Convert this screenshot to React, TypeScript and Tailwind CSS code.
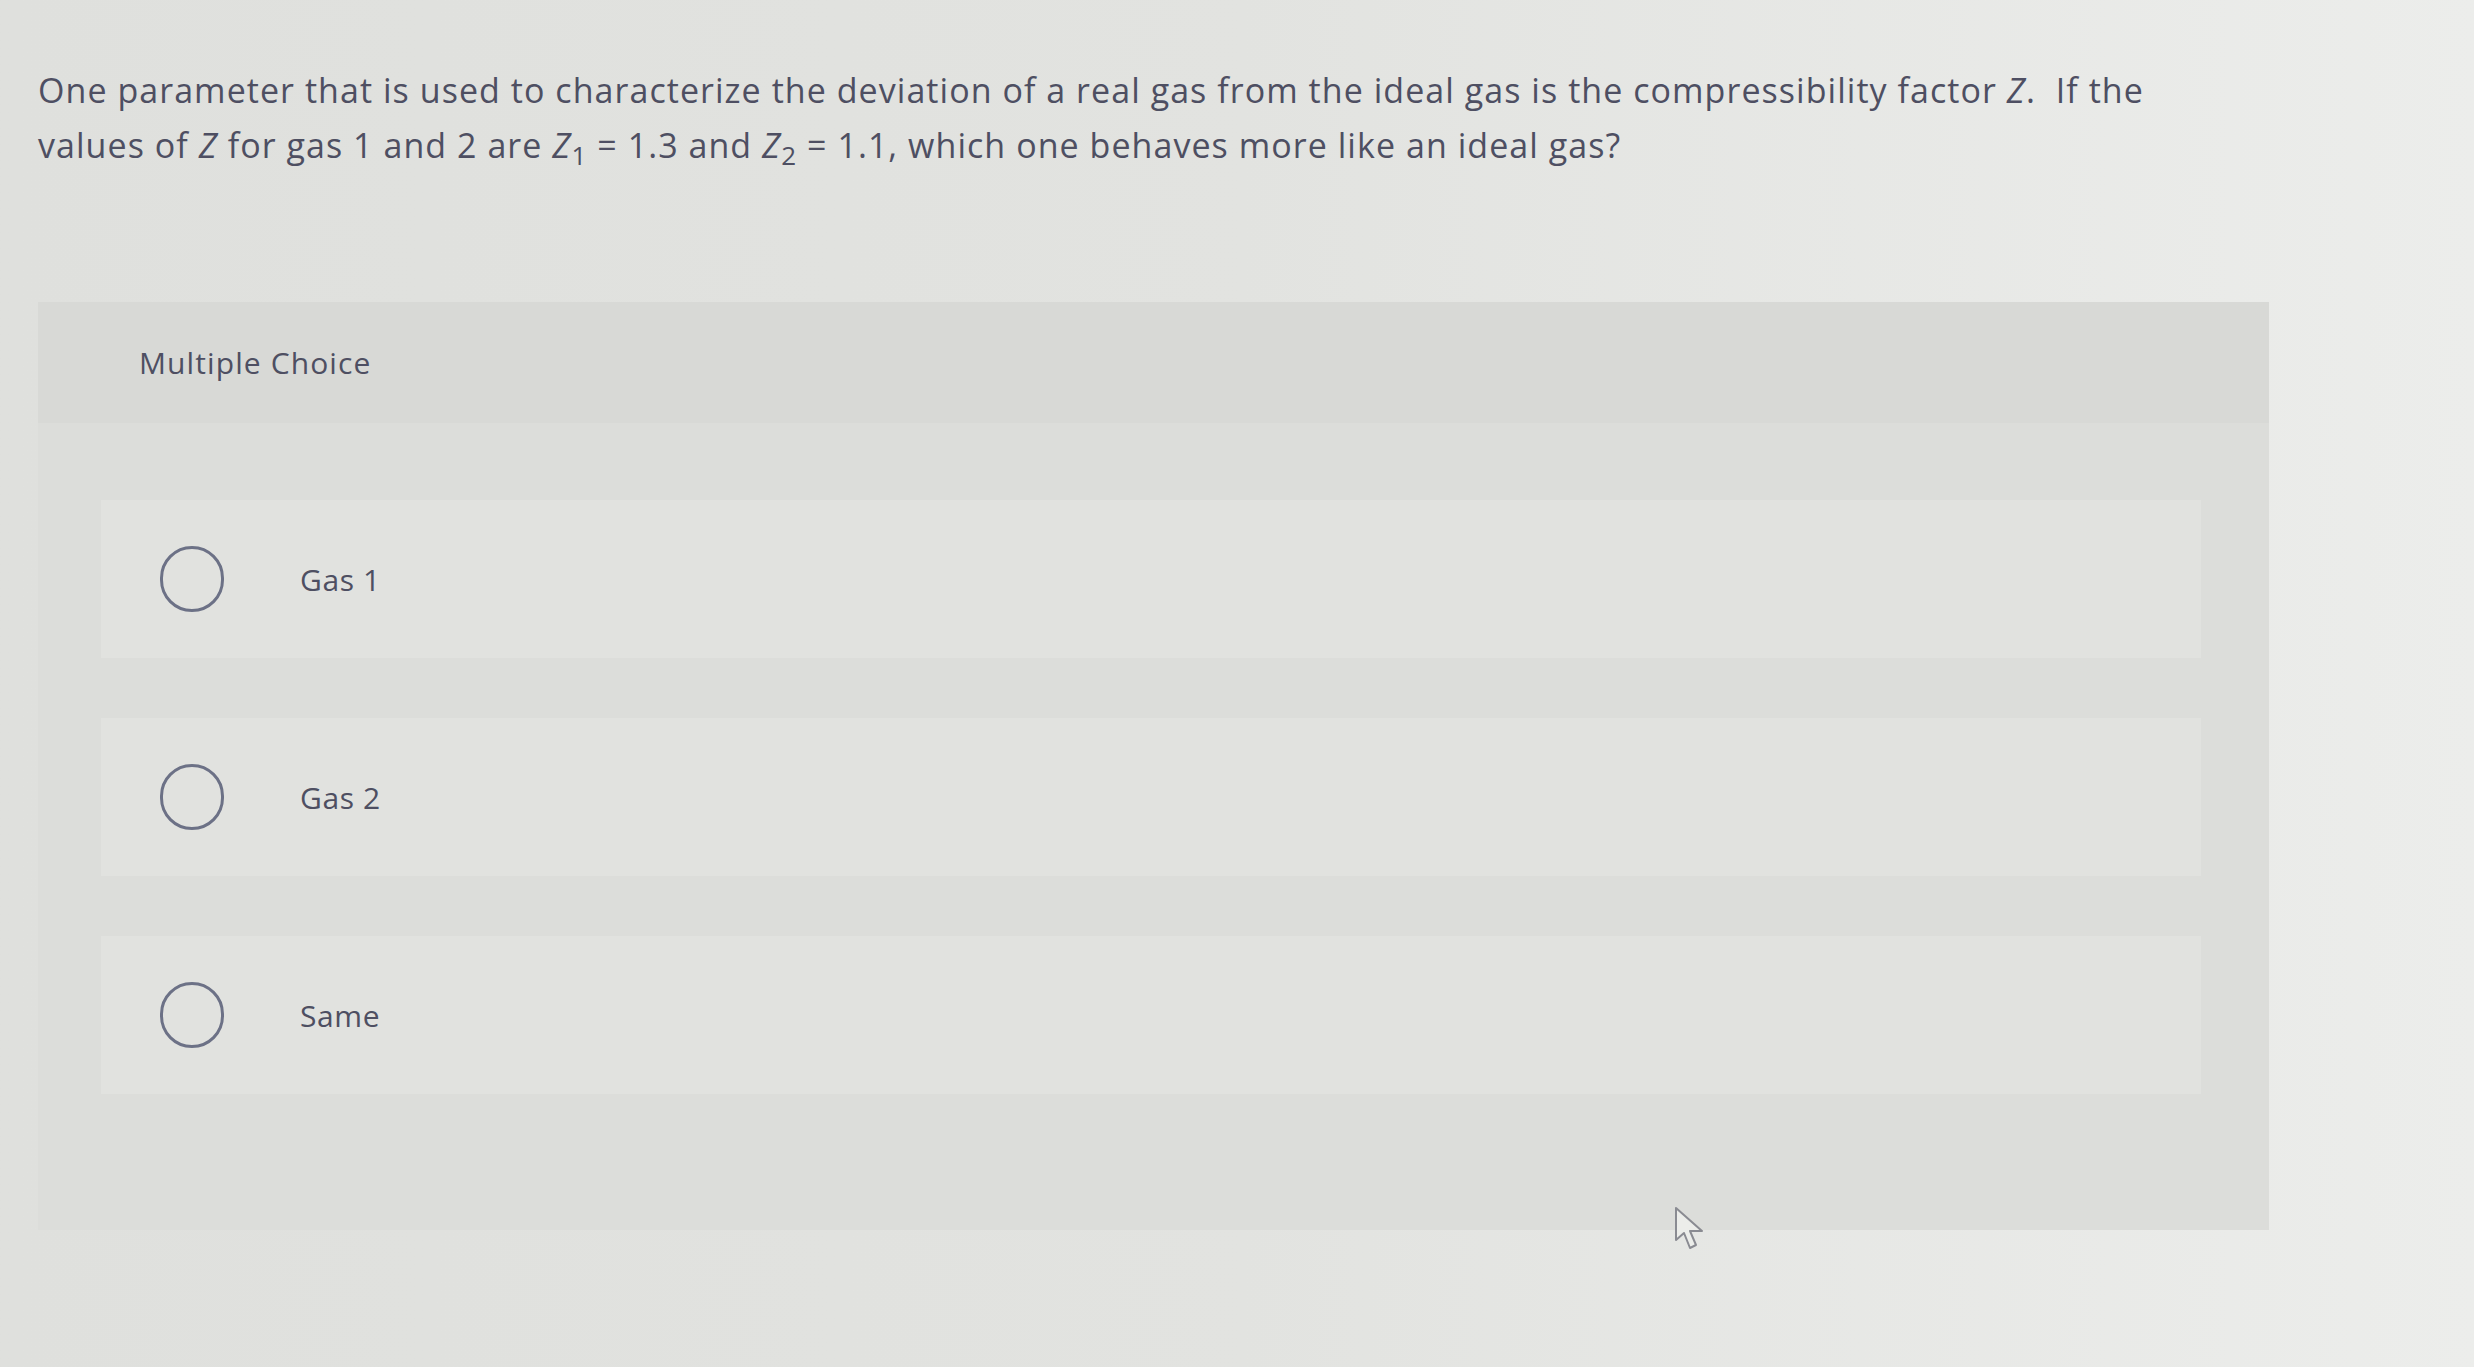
import React from 'react';

const options = ['Gas 1', 'Gas 2', 'Same'];

function Radio() {
  return (
    <span className="block h-[66px] w-[64px] shrink-0 rounded-full border-[3px] border-[#6c7186]" />
  );
}

function Cursor() {
  return (
    <svg width="34" height="46" viewBox="0 0 34 46" className="absolute left-[1674px] top-[1206px]">
      <path
        d="M2 2 L2 34 L10 27 L16 42 L22 39 L16 25 L28 25 Z"
        fill="#ecedea"
        stroke="#8a8b92"
        strokeWidth="2"
        strokeLinejoin="round"
      />
    </svg>
  );
}

export default function App() {
  return (
    <div
      className="relative min-h-screen w-full overflow-hidden bg-linear-to-r from-[#dfe0dd] via-[#e2e3e0] to-[#ecedeb] pl-[38px] pt-[63px] text-[#4e4f62]"
      style={{ fontFamily: '"Open Sans", "Noto Sans", sans-serif' }}
    >
      <p className="text-[34px] leading-[55px] tracking-[1.05px]">
        One parameter that is used to characterize the deviation of a real gas from the ideal gas is the compressibility factor <i>Z</i>.&nbsp; If the
        <br />
        values of <i>Z</i> for gas 1 and 2 are <i>Z</i>
        <sub className="text-[26px]">1</sub> = 1.3 and <i>Z</i>
        <sub className="text-[26px]">2</sub> = 1.1, which one behaves more like an ideal gas?
      </p>

      <div className="mt-[129px] w-[2231px] bg-[#dcddda]">
        <div className="flex h-[121px] items-center bg-[#d8d9d6] pl-[101px]">
          <span className="text-[30px] tracking-[1.1px]">Multiple Choice</span>
        </div>
        <div className="flex flex-col gap-[60px] pb-[136px] pl-[63px] pr-[68px] pt-[77px]">
          {options.map((o) => (
            <div key={o} className="flex h-[158px] items-center bg-[#e1e2df] pl-[59px]">
              <Radio />
              <span className="ml-[76px] text-[30px] tracking-[0.6px]">{o}</span>
            </div>
          ))}
        </div>
      </div>

      <Cursor />
    </div>
  );
}
